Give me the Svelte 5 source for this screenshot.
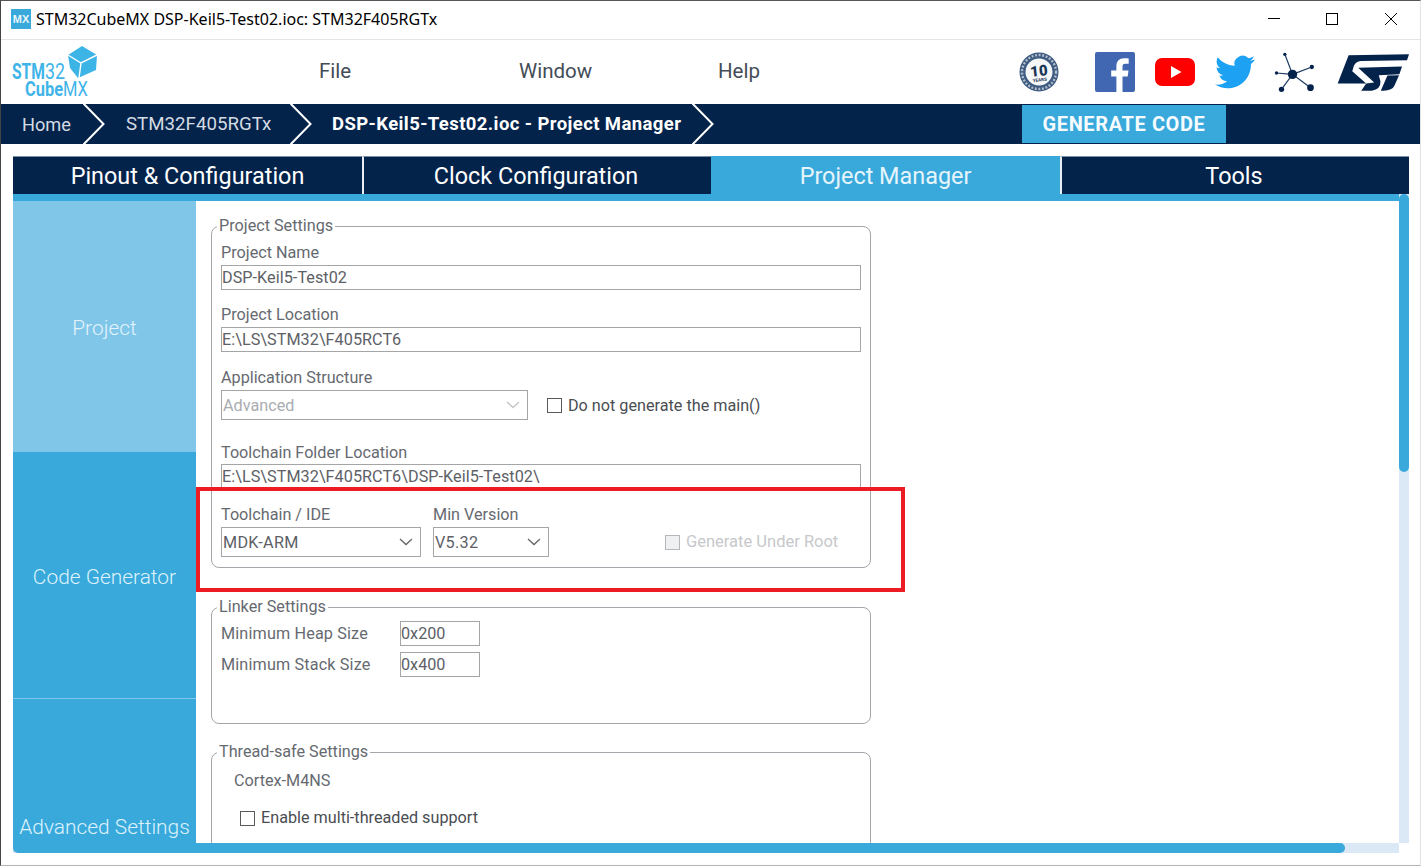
<script>
	const tabs = [
		{ label: 'Pinout & Configuration' },
		{ label: 'Clock Configuration' },
		{ label: 'Project Manager', active: true },
		{ label: 'Tools' }
	];
</script>

<div class="window">
	<header class="titlebar">
		<span class="app-icon">MX</span>
		<span class="title">STM32CubeMX DSP-Keil5-Test02.ioc: STM32F405RGTx</span>
		<div class="win-btns">
			<svg width="14" height="14" viewBox="0 0 14 14"><path d="M1 6.5h12" stroke="#000" /></svg>
			<svg width="14" height="14" viewBox="0 0 14 14"><rect x="1.5" y="1.5" width="11" height="11" fill="none" stroke="#000" /></svg>
			<svg class="win-close" width="14" height="14" viewBox="0 0 14 14"><path d="M1 1l12 12M13 1L1 13" stroke="#000" /></svg>
		</div>
	</header>

	<div class="menubar">
		<svg class="logo" width="90" height="59" viewBox="0 0 90 59">
			<path d="M72 1l15 9-1 15-18 8-8-10-2-13z" fill="#3cb4e6" />
			<path d="M58 10l13 8 16-8M71 18l-2 15" fill="none" stroke="#fff" stroke-width="1.4" />
			<text x="2" y="34" class="logo-b" textLength="33" lengthAdjust="spacingAndGlyphs">STM</text>
			<text x="35" y="34" class="logo-l" textLength="20" lengthAdjust="spacingAndGlyphs">32</text>
			<text x="15" y="51" class="logo-b small" textLength="38" lengthAdjust="spacingAndGlyphs">Cube</text>
			<text x="53" y="51" class="logo-l small" textLength="25" lengthAdjust="spacingAndGlyphs">MX</text>
		</svg>
		<nav class="menu">
			<span class="m-file">File</span>
			<span class="m-window">Window</span>
			<span>Help</span>
		</nav>
		<div class="socials">
			<svg class="badge" width="40" height="40" viewBox="0 0 40 40">
				<circle cx="20" cy="20" r="19.5" fill="#3d5a80" />
				<circle cx="20" cy="20" r="17" fill="none" stroke="#fff" stroke-width="2.4" stroke-dasharray="2 1.6" opacity="0.6" />
				<circle cx="20" cy="20" r="13.5" fill="#f4f6f8" />
				<g transform="rotate(-6 20 20)">
					<text x="20" y="24" class="badge-num">10</text>
					<text x="20" y="29.500" class="badge-sub">YEARS</text>
				</g>
			</svg>
			<svg class="fb" width="40" height="40" viewBox="0 0 40 40">
				<rect width="40" height="40" rx="2" fill="#4267b2" />
				<path d="M27.5 40V24.5h5.2l.8-6h-6v-3.8c0-1.7.5-2.9 3-2.9h3.2V6.4c-.6-.1-2.4-.2-4.6-.2-4.6 0-7.7 2.8-7.7 8v4.3h-5.2v6h5.2V40z" fill="#fff" />
			</svg>
			<svg class="yt" width="40" height="28" viewBox="0 0 40 28">
				<rect width="40" height="28" rx="7" fill="#f00" />
				<path d="M16 8l10.500 6L16 20z" fill="#fff" />
			</svg>
			<svg class="tw" width="40" height="40" viewBox="0 0 24 24">
				<path d="M23.953 4.57a10 10 0 01-2.825.775 4.958 4.958 0 002.163-2.723c-.951.555-2.005.959-3.127 1.184a4.92 4.92 0 00-8.384 4.482C7.69 8.095 4.067 6.13 1.64 3.162a4.822 4.822 0 00-.666 2.475c0 1.71.87 3.213 2.188 4.096a4.904 4.904 0 01-2.228-.616v.06a4.923 4.923 0 003.946 4.827 4.996 4.996 0 01-2.212.085 4.936 4.936 0 004.604 3.417 9.867 9.867 0 01-6.102 2.105c-.39 0-.779-.023-1.17-.067a13.995 13.995 0 007.557 2.209c9.053 0 13.998-7.496 13.998-13.985 0-.21 0-.42-.015-.63A9.935 9.935 0 0024 4.59z" fill="#1da1f2" />
			</svg>
			<svg class="net" width="42" height="40" viewBox="25 20 125 120">
				<g stroke="#1b3a63" stroke-width="3.500">
					<path d="M83 87L60 27M83 87L35 83M83 87L141 65M83 87L50 132M83 87L137 127" />
				</g>
				<g fill="#03234b">
					<circle cx="83" cy="87" r="14" />
					<circle cx="60" cy="27" r="5" />
					<circle cx="35" cy="83" r="5" />
					<circle cx="141" cy="65" r="6.500" />
					<circle cx="50" cy="132" r="8" />
					<circle cx="137" cy="127" r="10" />
				</g>
			</svg>
			<svg class="st" width="73" height="39" viewBox="220 22 220 116">
				<g fill="#03234b">
					<path d="M255 28L437 25 431 43 292 45Q276 46 271 60L266 76 308 113H222z" />
					<path d="M284 66L416 62 408 85 346 88 351 107Q352 130 325 135H293L308 113 332 110z" />
					<path d="M372 89L407 88 393 120Q387 134 360 135H352z" />
				</g>
			</svg>
		</div>
	</div>

	<div class="crumbs">
		<span class="crumb c-home">Home</span>
		<svg class="chev" width="22" height="40" viewBox="0 0 22 40"><path d="M0 -1L20.500 20 0 41" fill="none" stroke="#fff" stroke-width="2" /></svg>
		<span class="crumb c-mcu">STM32F405RGTx</span>
		<svg class="chev" width="22" height="40" viewBox="0 0 22 40"><path d="M0 -1L20.500 20 0 41" fill="none" stroke="#fff" stroke-width="2" /></svg>
		<span class="crumb c-proj">DSP-Keil5-Test02.ioc - Project Manager</span>
		<svg class="chev" width="22" height="40" viewBox="0 0 22 40"><path d="M0 -1L20.500 20 0 41" fill="none" stroke="#fff" stroke-width="2" /></svg>
		<button class="generate">GENERATE CODE</button>
	</div>

	<main class="main">
		<div class="tabs">
			{#each tabs as tab}
				<div class="tab" class:active={tab.active}>{tab.label}</div>
			{/each}
		</div>

		<div class="body">
			<div class="panel">
				<aside class="side">
					<div class="side-item s-project">Project</div>
					<div class="side-item s-code">Code Generator</div>
					<div class="side-item s-adv">Advanced Settings</div>
				</aside>

				<div class="form">
					<fieldset class="fs-project">
						<legend>Project Settings</legend>
						<div class="field">
							<span class="lbl">Project Name</span>
							<div class="input">DSP-Keil5-Test02</div>
						</div>
						<div class="field">
							<span class="lbl">Project Location</span>
							<div class="input">E:\LS\STM32\F405RCT6</div>
						</div>
						<div class="field">
							<span class="lbl">Application Structure</span>
							<div class="row">
								<div class="select disabled w-app">
									<span>Advanced</span>
									<svg width="14" height="8" viewBox="0 0 14 8"><path d="M1 1l6 5.500L13 1" fill="none" stroke="#c4c4c4" stroke-width="1.300" /></svg>
								</div>
								<div class="check c-main">
									<span class="box"></span>
									<span>Do not generate the main()</span>
								</div>
							</div>
						</div>
						<div class="field f-folder">
							<span class="lbl">Toolchain Folder Location</span>
							<div class="input">E:\LS\STM32\F405RCT6\DSP-Keil5-Test02\</div>
						</div>
						<div class="tool-row">
							<div class="field w-ide">
								<span class="lbl">Toolchain / IDE</span>
								<div class="select">
									<span>MDK-ARM</span>
									<svg width="14" height="8" viewBox="0 0 14 8"><path d="M1 1l6 5.500L13 1" fill="none" stroke="#666" stroke-width="1.300" /></svg>
								</div>
							</div>
							<div class="field w-ver">
								<span class="lbl">Min Version</span>
								<div class="select">
									<span>V5.32</span>
									<svg width="14" height="8" viewBox="0 0 14 8"><path d="M1 1l6 5.500L13 1" fill="none" stroke="#666" stroke-width="1.300" /></svg>
								</div>
							</div>
							<div class="check c-root">
								<span class="box off"></span>
								<span>Generate Under Root</span>
							</div>
						</div>
					</fieldset>

					<fieldset class="fs-linker">
						<legend>Linker Settings</legend>
						<div class="size-row">
							<span class="lbl">Minimum Heap Size</span>
							<div class="input small">0x200</div>
						</div>
						<div class="size-row">
							<span class="lbl">Minimum Stack Size</span>
							<div class="input small">0x400</div>
						</div>
					</fieldset>

					<fieldset class="fs-thread">
						<legend>Thread-safe Settings</legend>
						<div class="lbl core">Cortex-M4NS</div>
						<div class="check c-thread">
							<span class="box"></span>
							<span>Enable multi-threaded support</span>
						</div>
						<div class="spacer"></div>
					</fieldset>
				</div>
			</div>
			<div class="vscroll"><div class="vthumb"></div></div>
			<div class="hscroll"><div class="hthumb"></div></div>
		</div>
	</main>

	<div class="highlight"></div>
</div>

<style>
	:global(body) {
		margin: 0;
		background: #fff;
	}

	.window {
		position: relative;
		box-sizing: border-box;
		width: 1421px;
		height: 866px;
		overflow: hidden;
		background: #fff;
		border-top: 1px solid #555;
		border-left: 1px solid #444;
		border-right: 1px solid #e2e2e2;
		border-bottom: 1px solid #b4b4b4;
		font-family: Roboto, sans-serif;
	}

	/* title bar */
	.titlebar {
		display: flex;
		align-items: center;
		box-sizing: border-box;
		height: 39px;
		border-bottom: 1px solid #e5e5e5;
		padding: 0 0 2px 10px;
	}

	.app-icon {
		display: flex;
		align-items: center;
		justify-content: center;
		width: 20px;
		height: 20px;
		background: #39a9dc;
		color: #e8f5fb;
		font: bold 11px "Liberation Sans", sans-serif;
	}

	.title {
		margin-left: 5px;
		font: 16px "Noto Sans", sans-serif;
		color: #000;
	}

	.win-btns {
		display: flex;
		gap: 44px;
		margin-left: auto;
		margin-right: 22px;
	}

	.win-close {
		margin-left: 1px;
	}

	/* menu bar */
	.menubar {
		display: flex;
		align-items: center;
		height: 64px;
	}

	.logo {
		flex: none;
		align-self: flex-start;
		margin: 5px 0 0 9px;
	}

	.logo text {
		font-family: Roboto, sans-serif;
		font-size: 22px;
		fill: #3fb4e8;
	}

	.logo text.small {
		font-size: 20px;
	}

	.logo-b {
		font-weight: 700;
	}

	.logo-l {
		font-weight: 400;
	}

	.menu {
		display: flex;
		margin-left: 219px;
		margin-top: -3px;
		font-size: 20.500px;
		color: #444c57;
	}

	.m-file {
		width: 200px;
	}

	.m-window {
		width: 199px;
	}

	.socials {
		display: flex;
		align-items: center;
		margin-left: auto;
		margin-right: 10px;
	}

	.badge-num {
		font: 900 15px Roboto, sans-serif;
		fill: #1c3557;
		text-anchor: middle;
	}

	.badge-sub {
		font: 700 4.500px Roboto, sans-serif;
		fill: #1c3557;
		text-anchor: middle;
	}

	.fb {
		margin-left: 36px;
	}

	.yt {
		margin-left: 20px;
	}

	.tw {
		margin-left: 20px;
	}

	.net {
		margin-left: 18px;
	}

	.st {
		margin-left: 22px;
	}

	/* breadcrumb */
	.crumbs {
		display: flex;
		align-items: center;
		height: 40px;
		background: #03234b;
		color: #d5dbe3;
		font-size: 18.700px;
	}

	.chev {
		flex: none;
	}

	.crumb {
		box-sizing: border-box;
		white-space: nowrap;
	}

	.c-home {
		width: 82px;
		padding-left: 21px;
		font-size: 18.200px;
	}

	.c-mcu {
		width: 185px;
		padding-left: 21px;
	}

	.c-proj {
		width: 380px;
		padding-left: 20px;
		color: #fff;
		font-weight: 700;
		font-size: 18.500px;
		letter-spacing: 0.4px;
	}

	.generate {
		box-sizing: border-box;
		width: 204px;
		height: 38px;
		margin-left: 308px;
		border: none;
		padding: 0;
		background: #39a9dc;
		color: #f6fbfe;
		font: 700 20px Roboto, sans-serif;
		letter-spacing: 0.6px;
	}

	/* tabs */
	.main {
		padding: 12px 10px 0 12px;
	}

	.tabs {
		display: grid;
		grid-template-columns: repeat(4, 349px);
		height: 38px;
	}

	.tab {
		display: flex;
		align-items: center;
		justify-content: center;
		box-sizing: border-box;
		padding-top: 1px;
		background: #03234b;
		color: #fff;
		font-size: 23.400px;
		border-top: 1px solid #7e8ea3;
	}

	.tab:nth-child(2),
	.tab:nth-child(4) {
		border-left: 2px solid #e8eef3;
		padding-right: 3px;
	}

	.tab.active {
		background: #39a9dc;
		color: #e6f5fb;
		border-top-color: #39a9dc;
	}

	.body {
		display: grid;
		grid-template-columns: 1386px 10px;
		grid-template-rows: 649px 10px;
	}

	.panel {
		display: flex;
		box-sizing: border-box;
		border-top: 7px solid #39a9dc;
		overflow: hidden;
	}

	.side {
		flex: none;
		width: 183px;
		background: #39a9dc;
		color: #dff2fb;
		font-size: 20.900px;
		font-weight: 300;
	}

	.side-item {
		display: flex;
		align-items: center;
		justify-content: center;
		box-sizing: border-box;
		padding-top: 4px;
		white-space: nowrap;
	}

	.s-project {
		height: 251px;
		padding-top: 2px;
		background: #7fc6e9;
		color: #e4f3fb;
	}

	.s-code {
		height: 247px;
		border-bottom: 1px solid #7fc6e9;
	}

	.s-adv {
		height: 252px;
	}

	.form {
		padding: 15px 0 0 15px;
		width: 660px;
		color: #666a70;
		font-size: 16.200px;
	}

	fieldset {
		box-sizing: border-box;
		width: 660px;
		margin: 0;
		padding: 7px 9px 10px;
		border: 1px solid #a3a7ab;
		border-radius: 8px;
		min-width: 0;
	}

	legend {
		margin-left: -4px;
		padding: 0 2px;
		line-height: 20px;
		color: #666a70;
	}

	.lbl {
		display: block;
		line-height: 20px;
	}

	.field {
		display: flex;
		flex-direction: column;
		gap: 2px;
		margin-bottom: 15px;
	}

	.field:nth-of-type(2) {
		margin-bottom: 16px;
	}

	.field:nth-of-type(3) {
		margin-bottom: 23px;
	}

	.f-folder {
		gap: 1px;
		margin-bottom: 16px;
	}

	.input {
		box-sizing: border-box;
		height: 25px;
		line-height: 23px;
		border: 1px solid #a5a5a5;
		color: #5d6166;
		letter-spacing: 0.05px;
		white-space: nowrap;
	}

	.input.small {
		width: 80px;
		letter-spacing: 0;
	}

	.row {
		display: flex;
		align-items: center;
	}

	.select {
		display: flex;
		align-items: center;
		justify-content: space-between;
		box-sizing: border-box;
		height: 30px;
		padding: 0 7px 0 1px;
		border: 1px solid #a5a5a5;
		color: #5d6166;
		letter-spacing: 0.3px;
	}

	.select.disabled {
		color: #a9adb1;
		letter-spacing: 0;
	}

	.w-app {
		width: 307px;
	}

	.tool-row {
		display: flex;
		align-items: flex-end;
	}

	.tool-row .field {
		gap: 2px;
		margin-bottom: 0;
	}

	.w-ide {
		width: 200px;
	}

	.w-ver {
		width: 116px;
		margin-left: 12px;
	}

	.check {
		display: flex;
		align-items: center;
		gap: 6px;
		color: #4a4d52;
		line-height: 20px;
		white-space: nowrap;
	}

	.box {
		flex: none;
		box-sizing: border-box;
		width: 15px;
		height: 15px;
		border: 1px solid #5a5a5a;
		background: #fff;
	}

	.box.off {
		border-color: #b4b8bc;
		background: #eef0f2;
	}

	.c-main {
		margin-left: 19px;
		margin-top: 1px;
	}

	.c-root {
		margin-left: 116px;
		margin-bottom: 5px;
		font-size: 16.500px;
		color: #c6c8cb;
	}

	.fs-linker {
		margin-top: 29px;
		padding: 4px 9px 46px;
	}

	.size-row {
		display: flex;
		align-items: center;
		margin-bottom: 6px;
	}

	.size-row:last-child {
		margin-bottom: 0;
	}

	.size-row .lbl {
		width: 179px;
		letter-spacing: 0.15px;
	}

	.fs-thread {
		margin-top: 18px;
		padding: 9px 9px 0;
	}

	.core {
		padding-left: 13px;
	}

	.c-thread {
		margin-top: 17px;
		padding-left: 19px;
	}

	.spacer {
		height: 200px;
	}

	/* scrollbars */
	.vscroll,
	.hscroll {
		background: #dbe9f6;
	}

	.vthumb {
		height: 278px;
		border-radius: 5px;
		background: #39a9dc;
	}

	.hthumb {
		width: 1332px;
		height: 10px;
		border-radius: 0 5px 5px 5px;
		background: #39a9dc;
	}

	/* red annotation drawn over the window */
	.highlight {
		position: absolute;
		left: 195px;
		top: 486px;
		box-sizing: border-box;
		width: 709px;
		height: 105px;
		border: 4px solid #ed1c24;
	}
</style>
